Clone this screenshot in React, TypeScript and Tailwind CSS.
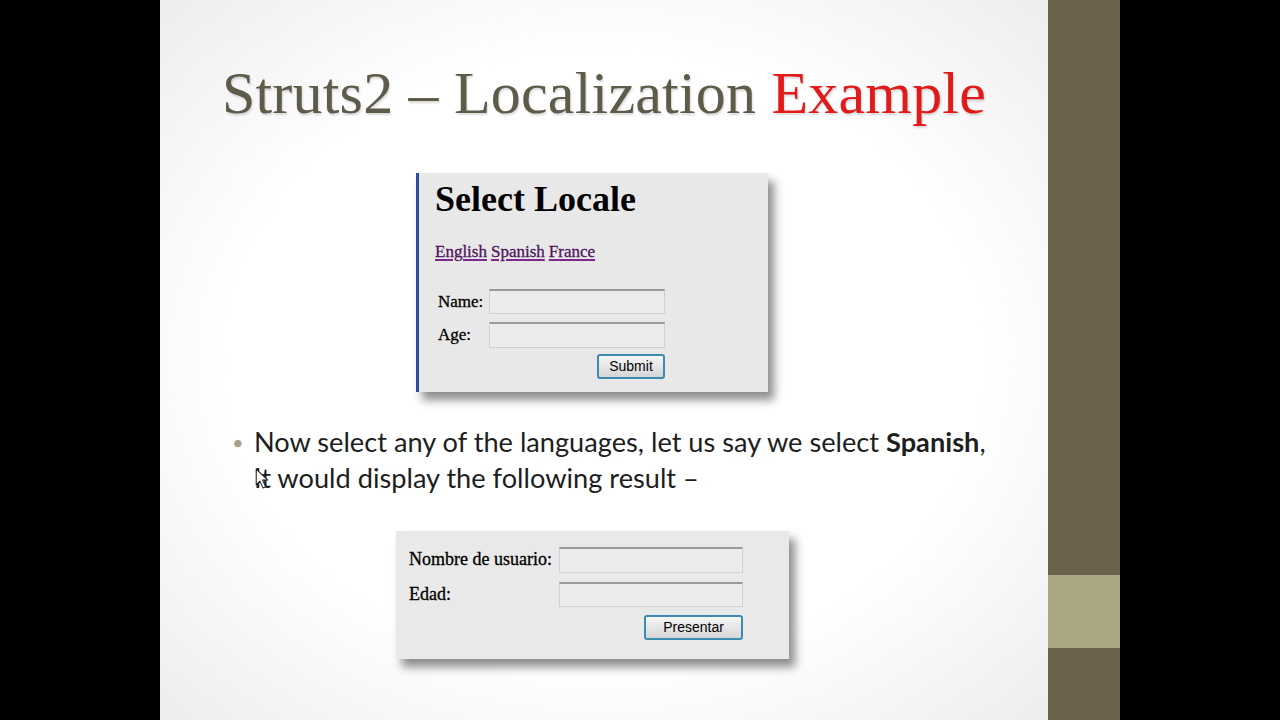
export default function App() {
  const serif = { fontFamily: '"Liberation Serif", "Times New Roman", serif' };
  return (
    <div className="w-[1280px] h-[720px] flex bg-black overflow-hidden">
      <div className="w-[160px] h-full bg-black" />
      <div className="w-[888px] h-full flex flex-col bg-[radial-gradient(ellipse_at_center,#ffffff_60%,#ededed_100%)]">
        <div
          className="mt-[60px] h-[66px] leading-[66px] text-[60px] text-center text-[#5f5b4b] tracking-[0.2px] [text-shadow:1px_2px_2px_rgba(0,0,0,0.15)]"
          style={{ fontFamily: '"Liberation Serif", "DejaVu Serif", serif' }}
        >
          Struts2 – Localization <span className="text-[#e11a1a]">Example</span>
        </div>

        {/* Panel 1 */}
        <div
          className="ml-[256px] mt-[47px] w-[352px] h-[219px] flex bg-[#e8e8e8] shadow-[6px_8px_9px_rgba(0,0,0,0.45)]"
          style={serif}
        >
          <div className="w-[3px] h-full bg-[#2e4f9a]" />
          <div className="flex flex-col pl-[16px]">
            <div className="mt-[8px] h-[36px] leading-[36px] text-[36px] font-bold text-black">Select Locale</div>
            <div className="mt-[25px] h-[20px] leading-[20px] text-[17px] text-[#4e1560] flex gap-[4px] [-webkit-text-stroke:0.3px_#4e1560]">
              <span className="underline decoration-[#7a2a8a] decoration-2 underline-offset-2">English</span>
              <span className="underline decoration-[#7a2a8a] decoration-2 underline-offset-2">Spanish</span>
              <span className="underline decoration-[#7a2a8a] decoration-2 underline-offset-2">France</span>
            </div>
            <div className="mt-[27px] flex items-center">
              <div className="w-[54px] pl-[3px] text-[17px] text-black [-webkit-text-stroke:0.3px_#000]">Name:</div>
              <div className="w-[176px] h-[25px] bg-[#ebebeb] border border-[#d0d0d0] border-t-[#9a9a9a] border-t-2" />
            </div>
            <div className="mt-[7px] flex items-center">
              <div className="w-[54px] pl-[3px] text-[17px] text-black [-webkit-text-stroke:0.3px_#000]">Age:</div>
              <div className="w-[176px] h-[26px] bg-[#ebebeb] border border-[#d0d0d0] border-t-[#9a9a9a] border-t-2" />
            </div>
            <div className="mt-[6px] flex justify-end w-[230px]">
              <div
                className="w-[68px] h-[25px] flex items-center justify-center rounded-[3px] border-2 border-[#3a8db0] bg-[linear-gradient(#f6f6f6,#d6d6d6)] text-[14px] text-black"
                style={{ fontFamily: '"Liberation Sans", Arial, sans-serif' }}
              >
                Submit
              </div>
            </div>
          </div>
        </div>

        {/* Bullet text */}
        <div
          className="relative ml-[72px] mt-[32px] flex text-[27.2px] leading-[36px] text-[#1e1e1e]"
          style={{ fontFamily: '"Lato", "Open Sans", sans-serif' }}
        >
          <div className="w-[22px] text-[#a3a08b] text-[20px]">•</div>
          <div className="w-[780px]">
            Now select any of the languages, let us say we select <b>Spanish</b>,
            <br />
            It would display the following result –
          </div>
          <svg
            className="absolute left-[23px] top-[44px]"
            width="15"
            height="22"
            viewBox="0 0 14 21"
          >
            <path
              d="M1 1 L1 16 L4.5 12.5 L7.5 19 L10 18 L7 11.5 L12 11.5 Z"
              fill="#ffffff"
              stroke="#222"
              strokeWidth="1"
              strokeLinejoin="round"
            />
          </svg>
        </div>

        {/* Panel 2 */}
        <div
          className="ml-[236px] mt-[35px] w-[393px] h-[128px] flex flex-col bg-[#e9e9e9] shadow-[6px_8px_9px_rgba(0,0,0,0.45)] pl-[13px]"
          style={serif}
        >
          <div className="mt-[15px] flex items-center">
            <div className="w-[150px] text-[18px] text-black [-webkit-text-stroke:0.3px_#000]">Nombre de usuario:</div>
            <div className="w-[184px] h-[26px] bg-[#ececec] border border-[#d2d2d2] border-t-[#9a9a9a] border-t-2" />
          </div>
          <div className="mt-[8px] flex items-center">
            <div className="w-[150px] text-[18px] text-black [-webkit-text-stroke:0.3px_#000]">Edad:</div>
            <div className="w-[184px] h-[25px] bg-[#ececec] border border-[#d2d2d2] border-t-[#9a9a9a] border-t-2" />
          </div>
          <div className="mt-[7px] flex justify-end w-[334px]">
            <div
              className="w-[99px] h-[25px] flex items-center justify-center rounded-[3px] border-2 border-[#3a8db0] bg-[linear-gradient(#f6f6f6,#d6d6d6)] text-[14px] text-black"
              style={{ fontFamily: '"Liberation Sans", Arial, sans-serif' }}
            >
              Presentar
            </div>
          </div>
        </div>
      </div>
      <div className="w-[72px] h-full flex flex-col bg-[#6a624a]">
        <div className="h-[575px]" />
        <div className="h-[73px] bg-[#aaa882]" />
      </div>
      <div className="w-[160px] h-full bg-black" />
    </div>
  );
}
